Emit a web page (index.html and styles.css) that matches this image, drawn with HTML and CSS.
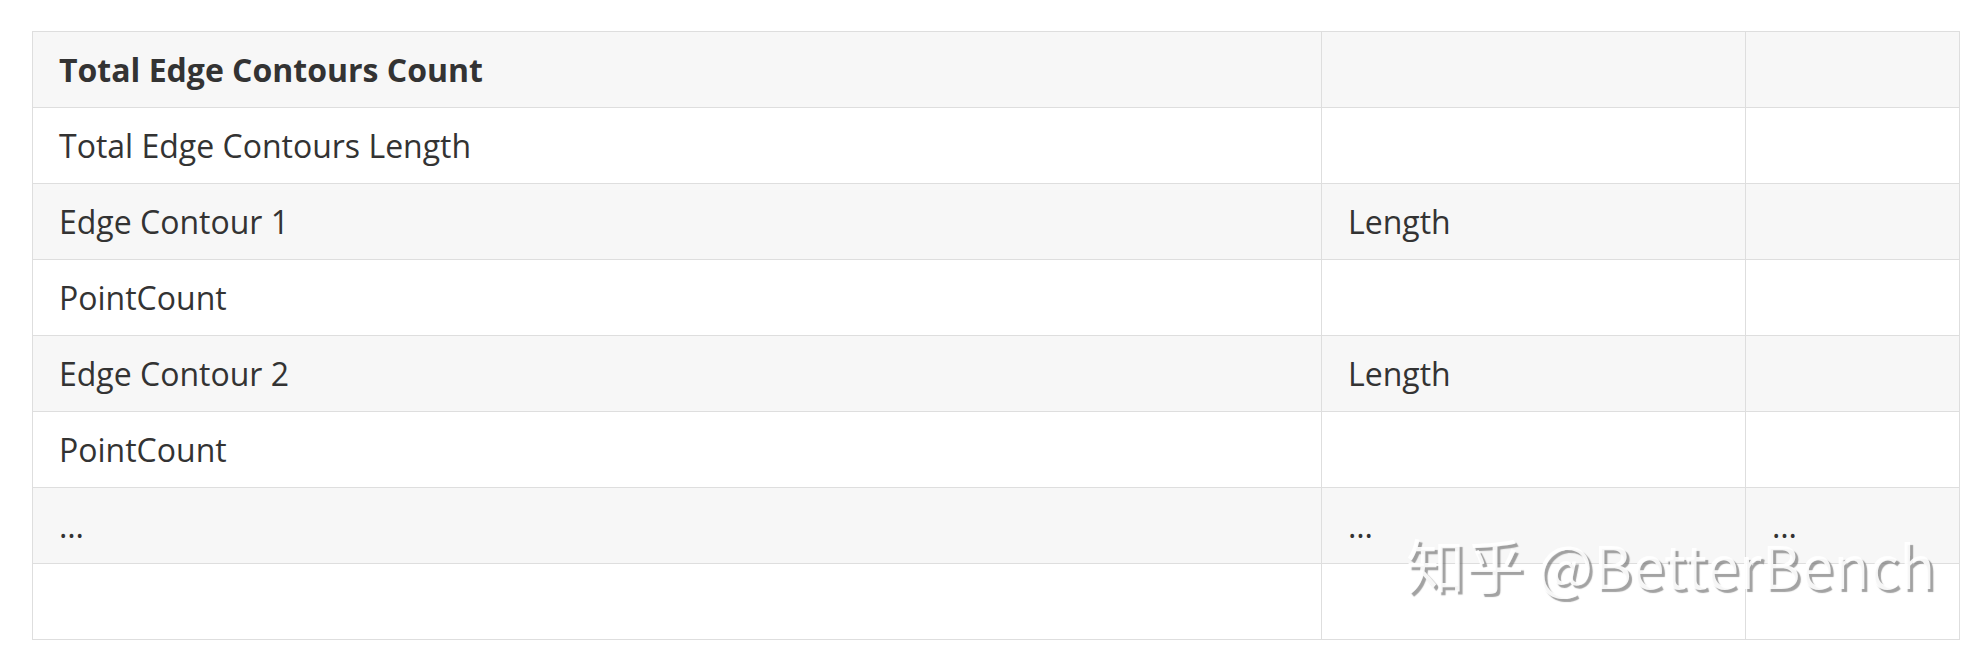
FILE: index.html
```html
<!DOCTYPE html>
<html>
<head>
<meta charset="utf-8">
<link rel="stylesheet" href="styles.css">
</head>
<body>
<div class="page">
  <table class="grid">
    <colgroup>
      <col class="c1"><col class="c2"><col class="c3">
    </colgroup>
    <tr class="odd"><td class="strong">Total Edge Contours Count</td><td></td><td></td></tr>
    <tr><td>Total Edge Contours Length</td><td></td><td></td></tr>
    <tr class="odd"><td>Edge Contour 1</td><td>Length</td><td></td></tr>
    <tr><td>PointCount</td><td></td><td></td></tr>
    <tr class="odd"><td>Edge Contour 2</td><td>Length</td><td></td></tr>
    <tr><td>PointCount</td><td></td><td></td></tr>
    <tr class="odd"><td>…</td><td>…</td><td>…</td></tr>
    <tr><td></td><td></td><td></td></tr>
  </table>
  <div class="watermark">知乎 @BetterBench</div>
</div>
</body>
</html>
```
FILE: styles.css
```css
html, body {
  margin: 0;
  padding: 0;
  background: #ffffff;
}
.page {
  position: relative;
  padding: 31px 29px 12px 32px;
  font-family: "Open Sans", "Noto Sans", sans-serif;
  color: #333333;
}
.grid {
  width: 1927px;
  border-collapse: collapse;
  table-layout: fixed;
  font-size: 32px;
}
.c1 { width: 1289px; }
.c2 { width: 424px; }
.c3 { width: 214px; }
.grid td {
  height: 75px;
  padding: 0 26px;
  border: 1.5px solid #dedede;
  box-sizing: border-box;
  vertical-align: middle;
  white-space: nowrap;
}
.grid tr { height: 76px; }
.grid tr.odd { background: #f7f7f7; }
.strong { font-weight: 700; }
.watermark {
  position: absolute;
  left: 1406px;
  top: 524px;
  font-family: "Noto Sans CJK SC", "Noto Sans", sans-serif;
  font-size: 59px;
  line-height: 80px;
  color: rgba(255, 255, 255, 0.9);
  text-shadow: 3px 3px 1px rgba(100, 100, 100, 0.6);
  white-space: nowrap;
}
```
